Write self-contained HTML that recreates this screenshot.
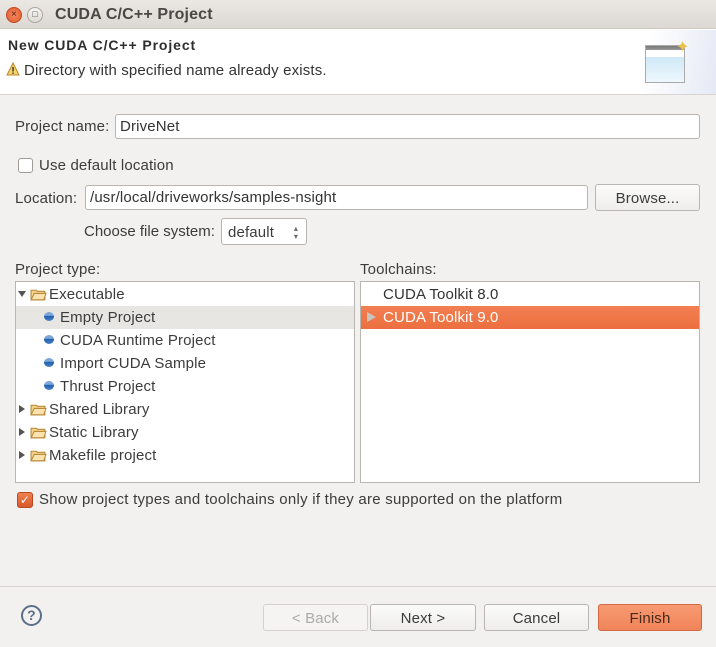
<!DOCTYPE html>
<html><head><style>
*{box-sizing:border-box;margin:0;padding:0}
body{width:716px;height:647px;background:#f2f1f0;font-family:"Liberation Sans",sans-serif;font-size:15px;letter-spacing:0.15px;color:#3c3c3c;position:relative;overflow:hidden}
.a{position:absolute;white-space:nowrap}
.inp{position:absolute;background:#fff;border:1px solid #b9b5b0;border-radius:3px;height:25px;padding:3px 4px 2px;color:#333}
.btn{position:absolute;border:1px solid #b9b5b0;border-radius:3px;background:linear-gradient(#fbfbfa,#eeedeb);height:27px;text-align:center;line-height:27px;color:#3c3c3c}
.tree{position:absolute;background:#fff;border:1px solid #b9b5b0}
.row{position:absolute;left:0;right:0;height:23px;line-height:24px;white-space:nowrap}
.dot{position:absolute;width:10px;height:9px;border-radius:50%;background:linear-gradient(#7ea6d6 40%,#1f5fae 45%,#4b84c8);top:6px}
.fold{position:absolute;top:5px;width:17px;height:13px}
.tri{position:absolute;top:8px;width:0;height:0}
</style></head><body>
<div class="a" style="left:0;top:0;width:716px;height:29px;background:linear-gradient(#ebe8e4,#dcd8d3);border-bottom:1px solid #cfcac4"></div>
<div class="a" style="left:6px;top:7px;width:16px;height:16px;border-radius:50%;background:radial-gradient(#f48a63,#e0582c);border:1px solid #c04a22;color:#5a1c08;font-size:10px;text-align:center;line-height:14px">×</div>
<div class="a" style="left:27px;top:7px;width:16px;height:16px;border-radius:50%;background:linear-gradient(#f5f4f2,#dedad5);border:1px solid #aaa49d;font-size:9px;text-align:center;line-height:13px;color:#555">□</div>
<div class="a" style="left:55px;top:6px;font-weight:bold;font-size:16px;color:#4a4744">CUDA C/C++ Project</div>
<div class="a" style="left:0;top:29px;width:716px;height:66px;background:#fff;border-bottom:1px solid #d9d6d2"></div>
<div class="a" style="left:600px;top:30px;width:116px;height:64px;background:linear-gradient(100deg,#fff 40%,#e5e9f5)"></div>
<div class="a" style="left:645px;top:45px;width:40px;height:38px;border:1px solid #aaa;background:linear-gradient(#777 0,#999 4px,#fff 4px,#fff 11px,#cfe9f7 11px,#eef7fc);"></div>
<div class="a" style="left:676px;top:37px;color:#e8c24a;font-size:16px">✦</div>
<div class="a" style="left:8px;top:37px;font-weight:bold;font-size:14px;letter-spacing:0.9px;color:#2e2e2e">New CUDA C/C++ Project</div>
<svg class="a" style="left:6px;top:62px" width="14" height="14"><path d="M7 1L13 13H1Z" fill="#f7d26b" stroke="#b58a2a"/><rect x="6.3" y="5" width="1.4" height="4.5" fill="#333"/><rect x="6.3" y="10.5" width="1.4" height="1.4" fill="#333"/></svg>
<div class="a" style="left:24px;top:62px;color:#333">Directory with specified name already exists.</div>

<div class="a" style="left:15px;top:118px">Project name:</div>
<div class="inp" style="left:115px;top:114px;width:585px">DriveNet</div>
<div class="a" style="left:18px;top:158px;width:15px;height:15px;border:1px solid #a09b96;border-radius:3px;background:#fff"></div>
<div class="a" style="left:39px;top:157px">Use default location</div>
<div class="a" style="left:15px;top:190px">Location:</div>
<div class="inp" style="left:85px;top:185px;width:503px">/usr/local/driveworks/samples-nsight</div>
<div class="btn" style="left:595px;top:184px;width:105px">Browse...</div>
<div class="a" style="left:84px;top:223px;letter-spacing:0">Choose file system:</div>
<div class="btn" style="left:221px;top:218px;width:86px;text-align:left;padding-left:6px;background:#fff">default<span style="position:absolute;right:8px;font-size:8px;line-height:8px;top:6px;color:#666">▴<br>▾</span></div>

<div class="a" style="left:15px;top:261px">Project type:</div>
<div class="a" style="left:360px;top:261px">Toolchains:</div>
<div class="tree" style="left:15px;top:281px;width:340px;height:202px">
 <div class="row" style="top:1px"><div class="tri" style="left:2px;border-left:4px solid transparent;border-right:4px solid transparent;border-top:6px solid #555"></div><svg class="fold" style="left:14px" viewBox="0 0 16 12"><path d="M1 2h5l1 1h7v8H1z" fill="#f6d18a" stroke="#b88a3a"/><path d="M1 11l3-6h11l-2 6z" fill="#fbe3b0" stroke="#b88a3a"/></svg><span style="position:absolute;left:33px">Executable</span></div>
 <div class="row" style="top:24px;background:#e8e6e3"><div class="dot" style="left:28px"></div><span style="position:absolute;left:44px">Empty Project</span></div>
 <div class="row" style="top:47px"><div class="dot" style="left:28px"></div><span style="position:absolute;left:44px">CUDA Runtime Project</span></div>
 <div class="row" style="top:70px"><div class="dot" style="left:28px"></div><span style="position:absolute;left:44px">Import CUDA Sample</span></div>
 <div class="row" style="top:93px"><div class="dot" style="left:28px"></div><span style="position:absolute;left:44px">Thrust Project</span></div>
 <div class="row" style="top:116px"><div class="tri" style="left:3px;top:7px;border-top:4px solid transparent;border-bottom:4px solid transparent;border-left:6px solid #555"></div><svg class="fold" style="left:14px" viewBox="0 0 16 12"><path d="M1 2h5l1 1h7v8H1z" fill="#f6d18a" stroke="#b88a3a"/><path d="M1 11l3-6h11l-2 6z" fill="#fbe3b0" stroke="#b88a3a"/></svg><span style="position:absolute;left:33px">Shared Library</span></div>
 <div class="row" style="top:139px"><div class="tri" style="left:3px;top:7px;border-top:4px solid transparent;border-bottom:4px solid transparent;border-left:6px solid #555"></div><svg class="fold" style="left:14px" viewBox="0 0 16 12"><path d="M1 2h5l1 1h7v8H1z" fill="#f6d18a" stroke="#b88a3a"/><path d="M1 11l3-6h11l-2 6z" fill="#fbe3b0" stroke="#b88a3a"/></svg><span style="position:absolute;left:33px">Static Library</span></div>
 <div class="row" style="top:162px"><div class="tri" style="left:3px;top:7px;border-top:4px solid transparent;border-bottom:4px solid transparent;border-left:6px solid #555"></div><svg class="fold" style="left:14px" viewBox="0 0 16 12"><path d="M1 2h5l1 1h7v8H1z" fill="#f6d18a" stroke="#b88a3a"/><path d="M1 11l3-6h11l-2 6z" fill="#fbe3b0" stroke="#b88a3a"/></svg><span style="position:absolute;left:33px">Makefile project</span></div>
</div>
<div class="tree" style="left:360px;top:281px;width:340px;height:202px">
 <div class="row" style="top:1px"><span style="position:absolute;left:22px;color:#333">CUDA Toolkit 8.0</span></div>
 <div class="row" style="top:24px;background:linear-gradient(#f27f52,#ec6f3f);color:#fff"><div class="tri" style="left:6px;top:6px;border-top:5px solid transparent;border-bottom:5px solid transparent;border-left:9px solid #c9c4bf"></div><span style="position:absolute;left:22px">CUDA Toolkit 9.0</span></div>
</div>

<div class="a" style="left:17px;top:492px;width:16px;height:16px;border-radius:3px;background:linear-gradient(#f08050,#d9582a);border:1px solid #b84a20;color:#fff;font-size:12px;text-align:center;line-height:14px">✓</div>
<div class="a" style="left:39px;top:491px;letter-spacing:0.25px">Show project types and toolchains only if they are supported on the platform</div>

<div class="a" style="left:0;top:586px;width:716px;height:1px;background:#d9d6d2"></div>
<div class="a" style="left:21px;top:605px;width:21px;height:21px;border-radius:50%;border:2px solid #5c6f8a;text-align:center;line-height:17px;font-size:14px;font-weight:bold;color:#5c6f8a">?</div>
<div class="btn" style="left:263px;top:604px;width:105px;color:#aaa;background:#f5f4f3;border-color:#d5d1cc">&lt; Back</div>
<div class="btn" style="left:370px;top:604px;width:106px">Next &gt;</div>
<div class="btn" style="left:484px;top:604px;width:105px">Cancel</div>
<div class="btn" style="left:598px;top:604px;width:104px;background:linear-gradient(#f79a72,#f0845a);border-color:#d06a42;color:#4a2a1a">Finish</div>
</body></html>
